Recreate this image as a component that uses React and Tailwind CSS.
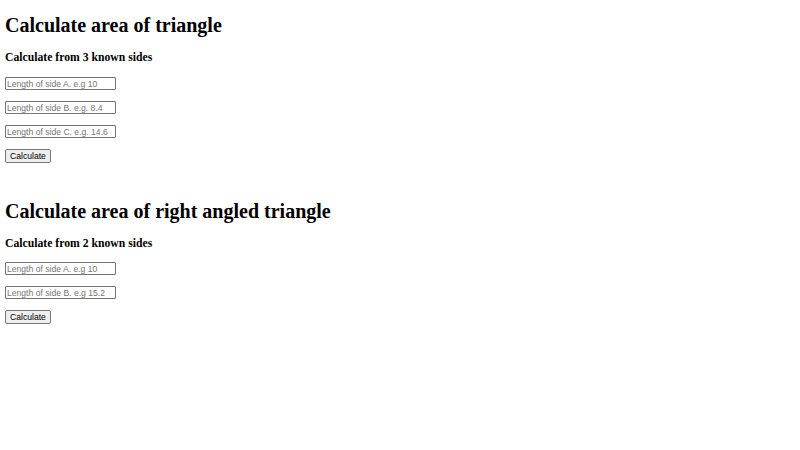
export default function App() {
  const serif = { fontFamily: '"Liberation Serif", "Times New Roman", serif' };
  const Input = ({ ph }) => (
    <div className="h-[24px]">
      <input
        placeholder={ph}
        className="block w-[111px] h-[13px] border border-[#767676] rounded-[1px] bg-white px-[1px] text-[8.6px] leading-[10px] text-black placeholder:text-[#757575] outline-none"
        style={{ fontFamily: '"Liberation Sans", Arial, sans-serif' }}
      />
    </div>
  );
  const Btn = () => (
    <button
      className="block h-[14px] px-[4px] border border-[#767676] rounded-[2px] bg-[#efefef] text-[8.6px] leading-[10px] text-black"
      style={{ fontFamily: '"Liberation Sans", Arial, sans-serif' }}
    >
      Calculate
    </button>
  );
  return (
    <div className="w-[800px] h-[450px] bg-white px-[5px] pt-[14px] text-black" style={serif}>
      <h1 className="text-[20px] leading-[23px] font-bold">Calculate area of triangle</h1>
      <h3 className="mt-[14px] text-[11.7px] leading-[14px] font-bold">Calculate from 3 known sides</h3>
      <div className="mt-[12px]">
        <Input ph="Length of side A. e.g 10" />
        <Input ph="Length of side B. e.g. 8.4" />
        <Input ph="Length of side C. e.g. 14.6" />
        <Btn />
      </div>
      <h1 className="mt-[37px] text-[20px] leading-[23px] font-bold">Calculate area of right angled triangle</h1>
      <h3 className="mt-[14px] text-[11.7px] leading-[14px] font-bold">Calculate from 2 known sides</h3>
      <div className="mt-[11px]">
        <Input ph="Length of side A. e.g 10" />
        <Input ph="Length of side B. e.g 15.2" />
        <Btn />
      </div>
    </div>
  );
}
